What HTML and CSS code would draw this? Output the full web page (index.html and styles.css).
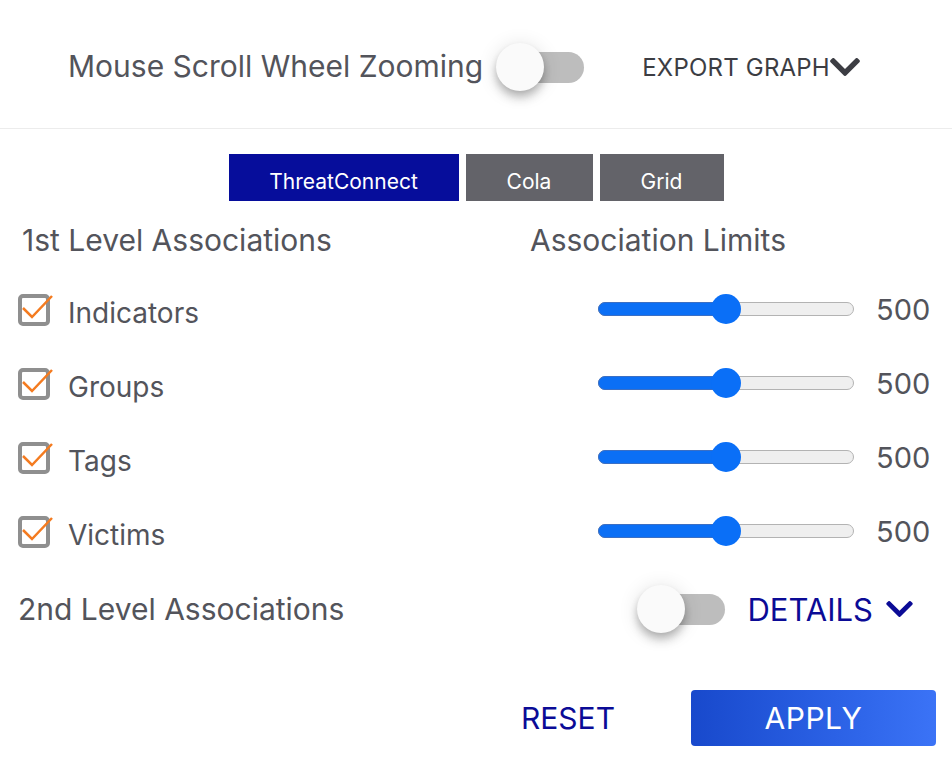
FILE: index.html
```html
<!DOCTYPE html>
<html>
<head>
<meta charset="utf-8">
<link rel="stylesheet" href="styles.css">
</head>
<body>
<div class="panel">
  <header class="top">
    <span class="top-label">Mouse Scroll Wheel Zooming</span>
    <span class="switch switch-top"><span class="switch-thumb"></span></span>
    <span class="export">EXPORT GRAPH<svg class="chev chev-export" viewBox="5 124 438 264"><path d="M207.029 381.476L12.686 187.132c-9.373-9.373-9.373-24.569 0-33.941l22.667-22.667c9.357-9.357 24.522-9.375 33.901-.04L224 284.505l154.745-154.021c9.379-9.335 24.544-9.317 33.901.04l22.667 22.667c9.373 9.373 9.373 24.569 0 33.941L240.971 381.476c-9.373 9.372-24.569 9.372-33.942 0z"/></svg></span>
  </header>

  <div class="tabs">
    <span class="tab tab-active tab-tc">ThreatConnect</span>
    <span class="tab tab-cola">Cola</span>
    <span class="tab tab-grid">Grid</span>
  </div>

  <div class="headings">
    <span class="heading heading-left">1st Level Associations</span>
    <span class="heading">Association Limits</span>
  </div>

  <div class="rows">
    <div class="row">
      <label class="check"><svg class="cb" width="36" height="32" viewBox="0 0 36 32"><rect x="2" y="2" width="28" height="28" rx="3" class="cb-box"/><path d="M5 14 L14 23 L34 2" class="cb-mark"/></svg><span class="check-label">Indicators</span></label>
      <div class="limit"><div class="range"><div class="range-fill" style="width:50%"></div><div class="range-thumb" style="left:50%"></div></div><span class="value">500</span></div>
    </div>
    <div class="row">
      <label class="check"><svg class="cb" width="36" height="32" viewBox="0 0 36 32"><rect x="2" y="2" width="28" height="28" rx="3" class="cb-box"/><path d="M5 14 L14 23 L34 2" class="cb-mark"/></svg><span class="check-label">Groups</span></label>
      <div class="limit"><div class="range"><div class="range-fill" style="width:50%"></div><div class="range-thumb" style="left:50%"></div></div><span class="value">500</span></div>
    </div>
    <div class="row">
      <label class="check"><svg class="cb" width="36" height="32" viewBox="0 0 36 32"><rect x="2" y="2" width="28" height="28" rx="3" class="cb-box"/><path d="M5 14 L14 23 L34 2" class="cb-mark"/></svg><span class="check-label">Tags</span></label>
      <div class="limit"><div class="range"><div class="range-fill" style="width:50%"></div><div class="range-thumb" style="left:50%"></div></div><span class="value">500</span></div>
    </div>
    <div class="row">
      <label class="check"><svg class="cb" width="36" height="32" viewBox="0 0 36 32"><rect x="2" y="2" width="28" height="28" rx="3" class="cb-box"/><path d="M5 14 L14 23 L34 2" class="cb-mark"/></svg><span class="check-label">Victims</span></label>
      <div class="limit"><div class="range"><div class="range-fill" style="width:50%"></div><div class="range-thumb" style="left:50%"></div></div><span class="value">500</span></div>
    </div>
  </div>

  <div class="second">
    <span class="second-label">2nd Level Associations</span>
    <div class="second-right">
      <span class="switch switch-second"><span class="switch-thumb"></span></span>
      <span class="details">DETAILS<svg class="chev chev-details" viewBox="5 124 438 264"><path d="M207.029 381.476L12.686 187.132c-9.373-9.373-9.373-24.569 0-33.941l22.667-22.667c9.357-9.357 24.522-9.375 33.901-.04L224 284.505l154.745-154.021c9.379-9.335 24.544-9.317 33.901.04l22.667 22.667c9.373 9.373 9.373 24.569 0 33.941L240.971 381.476c-9.373 9.372-24.569 9.372-33.942 0z"/></svg></span>
    </div>
  </div>

  <div class="actions">
    <span class="btn-reset">RESET</span>
    <span class="btn-apply">APPLY</span>
  </div>
</div>
</body>
</html>
```

FILE: styles.css
```css
* { box-sizing: border-box; }
html, body { margin: 0; padding: 0; background: #ffffff; }
body {
  font-family: Inter, "Noto Sans", "Liberation Sans", sans-serif;
  color: #53545b;
  width: 952px;
  height: 764px;
  overflow: hidden;
}
.panel { width: 952px; }

/* header */
.top {
  height: 129px;
  border-bottom: 1px solid #ececec;
  display: flex;
  align-items: center;
  padding-left: 68px;
  padding-top: 6px;
}
.top-label {
  font-size: 30px;
  line-height: 36px;
  color: #53545b;
  padding-bottom: 2px;
}
.switch {
  position: relative;
  display: inline-block;
  width: 86px;
  height: 31px;
  border-radius: 16px;
  background: #bdbdbd;
}
.switch-thumb {
  position: absolute;
  left: -2px;
  top: -9px;
  width: 48px;
  height: 48px;
  border-radius: 50%;
  background: #fafafa;
  box-shadow: 0 4px 8px -2px rgba(0,0,0,0.2), 0 8px 10px rgba(0,0,0,0.14), 0 2px 20px rgba(0,0,0,0.12);
}
.switch-top { margin-left: 15px; }
.export {
  margin-left: 58px;
  font-size: 24px;
  color: #3c3d43;
  display: inline-flex;
  align-items: center;
  letter-spacing: 0.2px;
}
.chev { fill: currentColor; display: block; }
.chev-export { width: 30px; height: 18px; }

/* tabs */
.tabs {
  display: flex;
  justify-content: center;
  gap: 7px;
  margin-top: 25px;
}
.tab {
  height: 47px;
  display: flex;
  align-items: center;
  justify-content: center;
  color: #ffffff;
  font-size: 21px;
  padding-top: 8px;
  background: #636369;
}
.tab-active { background: #060d9b; }
.tab-tc { width: 230px; }
.tab-cola { width: 127px; }
.tab-grid { width: 124px; }

/* headings */
.headings {
  display: grid;
  grid-template-columns: 508px 1fr;
  margin-top: 19px;
  padding-left: 22px;
}
.heading {
  font-size: 30px;
  line-height: 40px;
}

/* rows */
.rows { margin-top: 13px; }
.row {
  height: 74px;
  display: flex;
  align-items: center;
  justify-content: space-between;
  padding: 0 22px 0 18px;
}
.check {
  display: flex;
  align-items: center;
  gap: 14px;
}
.cb { display: block; overflow: visible; }
.cb-box { fill: #ffffff; stroke: #8f8f8f; stroke-width: 4; }
.cb-mark { fill: none; stroke: #f47b20; stroke-width: 2.5; stroke-linejoin: miter; }
.check-label { font-size: 28px; line-height: 36px; padding-top: 6px; }
.limit {
  display: flex;
  align-items: center;
  gap: 22px;
}
.range {
  position: relative;
  width: 256px;
  height: 14px;
  border-radius: 7px;
  background: #efefef;
  border: 1px solid #b3b3b3;
  margin-top: -3px;
}
.range-fill {
  height: 14px;
  margin: -1px 0 0 -1px;
  border-radius: 7px;
  background: #0b6ff5;
  border: 1px solid #3b6fc4;
}
.range-thumb {
  position: absolute;
  top: 50%;
  width: 30px;
  height: 30px;
  margin: -15px 0 0 -15px;
  border-radius: 50%;
  background: #0a6ff7;
}
.value { font-size: 29px; line-height: 36px; width: 54px; }

/* second level */
.second {
  height: 80px;
  display: flex;
  align-items: center;
  padding: 0 39px 0 18px;
}
.second-label { font-size: 30px; line-height: 36px; }
.second-right {
  margin-left: auto;
  display: flex;
  align-items: center;
}
.switch-second { width: 86px; }
.details {
  margin-left: 22px;
  display: inline-flex;
  align-items: center;
  gap: 13px;
  font-size: 31px;
  color: #0b0b96;
}
.chev-details { width: 27px; height: 16px; }

/* actions */
.actions {
  margin-top: 41px;
  display: flex;
  justify-content: flex-end;
  align-items: center;
  padding-right: 16px;
}
.btn-reset {
  font-size: 30px;
  color: #0b0b96;
  margin-right: 76px;
}
.btn-apply {
  width: 245px;
  height: 56px;
  border-radius: 4px;
  background: linear-gradient(90deg, #1849cc 0%, #2f66ea 70%, #3b73f6 100%);
  color: #ffffff;
  font-size: 30px;
  display: flex;
  align-items: center;
  justify-content: center;
  letter-spacing: 0.5px;
}
```
